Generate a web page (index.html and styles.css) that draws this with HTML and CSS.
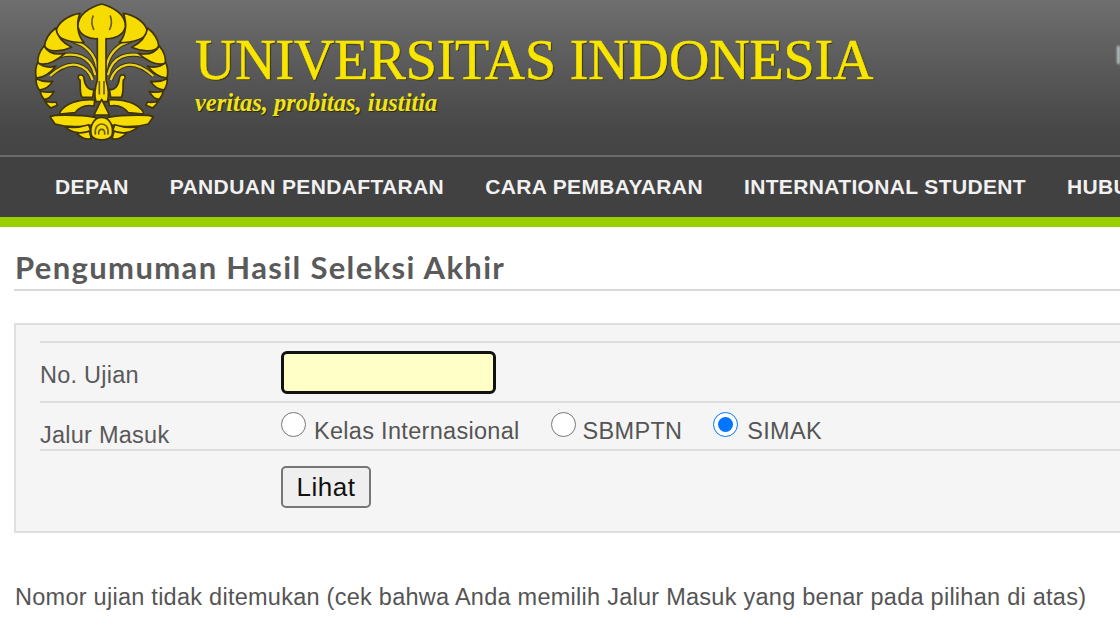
FILE: index.html
```html
<!DOCTYPE html>
<html lang="id">
<head>
<meta charset="utf-8">
<title>Universitas Indonesia</title>
<link rel="stylesheet" href="styles.css">
</head>
<body>
<header class="masthead">
  <svg class="logo" viewBox="0 0 720 480" aria-hidden="true">
    <defs>
      <g id="stems" fill="none">
        <path d="M292 205C285 165 262 135 215 122"/>
        <path d="M286 225C275 175 235 145 145 178"/>
        <path d="M278 240C262 195 215 170 150 228"/>
      </g>
      <g id="half">
        <path d="M240 40C205 45 172 68 168 95C172 118 215 128 252 128C232 105 228 70 240 40Z"/>
        <path d="M167 84C147 100 135 122 134 138C142 155 180 158 215 142C195 132 172 112 167 84Z"/>
        <path d="M132 138C118 155 112 175 114 190C135 197 165 186 195 160C170 165 145 160 132 138Z"/>
        <path d="M113 188C107 200 106 220 109 234C130 234 148 222 168 198C150 204 130 202 113 188Z"/>
        <path d="M108 236C108 250 112 262 118 270C134 268 150 258 158 244C142 246 124 244 108 236Z"/>
        <path d="M120 272C122 282 126 292 132 298C144 298 154 290 162 274C148 278 134 278 120 272Z"/>
        <path d="M134 302C138 310 144 318 152 324L172 316L168 306C156 308 145 307 134 302Z"/>
        <path d="M237 226C232 232 236 238 240 240C242 258 238 278 246 292L278 292L282 268C266 272 255 258 252 236C252 226 244 222 237 226Z"/>
        <path d="M180 336C196 312 232 296 284 300L282 318C262 314 240 318 225 338L180 342Z"/>
        <path d="M150 350L165 346C205 345 250 345 286 352L298 368C262 382 205 384 165 372Z"/>
        <path d="M195 380C220 384 248 380 266 374L272 392C245 403 215 400 195 380Z"/>
        <path d="M230 398C242 400 256 398 268 394L274 416C258 420 240 412 230 398Z"/>
      </g>
    </defs>
    <g class="stems-dark">
      <use href="#stems"/>
      <use href="#stems" transform="translate(610 0) scale(-1 1)"/>
    </g>
    <g class="stems-lite">
      <use href="#stems"/>
      <use href="#stems" transform="translate(610 0) scale(-1 1)"/>
    </g>
    <g class="seal">
      <use href="#half"/>
      <use href="#half" transform="translate(610 0) scale(-1 1)"/>
      <path d="M305 12C268 22 232 45 234 80C238 106 270 118 292 116L292 240C285 262 282 285 288 305L322 305C328 285 325 262 318 240L318 116C340 118 372 106 376 80C378 45 342 22 305 12Z"/>
      <path d="M305 298L328 345L282 345Z"/>
      <path d="M305 352C330 352 342 380 336 406C325 424 285 424 274 406C268 380 280 352 305 352Z"/>
      <path class="cut" d="M279 48C274 62 276 78 281 88M331 48C336 62 334 78 329 88M286 402C284 380 294 372 305 372C316 372 326 380 324 402M296 402C295 392 299 388 305 388C311 388 315 392 314 402M298 245L298 282M312 245L312 282"/>
    </g>
  </svg>
  <div class="brand">
    <div class="brand-name">UNIVERSITAS INDONESIA</div>
    <div class="brand-motto">veritas, probitas, iustitia</div>
  </div>
  <div class="edge-mark"></div>
</header>
<nav class="mainnav">
  <a href="#">DEPAN</a>
  <a href="#">PANDUAN PENDAFTARAN</a>
  <a href="#">CARA PEMBAYARAN</a>
  <a href="#">INTERNATIONAL STUDENT</a>
  <a href="#">HUBUNGI KAMI</a>
</nav>
<main class="content">
  <h1 class="page-title">Pengumuman Hasil Seleksi Akhir</h1>
  <form class="panel">
    <div class="row row-first">
      <label class="field-label" for="no">No. Ujian</label>
      <div class="field"><input class="text-input" id="no" type="text"></div>
    </div>
    <div class="row row-radio">
      <span class="field-label">Jalur Masuk</span>
      <div class="field radios">
        <label class="radio r1"><input type="radio" name="j">Kelas Internasional</label>
        <label class="radio r2"><input type="radio" name="j">SBMPTN</label>
        <label class="radio r3"><input type="radio" name="j" checked>SIMAK</label>
      </div>
    </div>
    <div class="row row-last">
      <span class="field-label"></span>
      <div class="field"><button class="submit" type="button">Lihat</button></div>
    </div>
  </form>
  <p class="message">Nomor ujian tidak ditemukan (cek bahwa Anda memilih Jalur Masuk yang benar pada pilihan di atas)</p>
</main>
</body>
</html>
```
FILE: styles.css
```css
* { box-sizing: border-box; }
html, body { margin: 0; padding: 0; height: 639px; overflow: hidden; background: #fff; }
body { width: 1120px; font-family: "Liberation Sans", Arial, sans-serif; color: #555; }

.masthead {
  display: flex; height: 155px; position: relative; align-items: flex-start;
  background: linear-gradient(#6f6f6f 0, #656565 30px, #474747 130px, #454545 100%);
}
.logo { width: 240px; height: 160px; flex: none; display: block; margin: 0 -45px -5px 0; }
.seal use, .seal path { fill: #f6dc00; stroke: #3f3306; stroke-width: 5; stroke-linejoin: round; }
.seal .cut { fill: none; stroke: #6a5a10; stroke-width: 5; stroke-linecap: round; }
.stems-dark { stroke: #3f3306; stroke-width: 13; }
.stems-lite { stroke: #e6d020; stroke-width: 7; }

.brand { padding-top: 31px; color: #f8e600; font-family: "Liberation Serif", serif; }
.brand-name { font-size: 56px; line-height: 58px; letter-spacing: -.15px; white-space: nowrap; -webkit-text-stroke: .5px #f8e600; text-shadow: 1px 1px 1px #332d05; }
.brand-motto { font-size: 24.5px; line-height: 26px; font-style: italic; font-weight: bold; margin-top: 1px; color: #efe41c; text-shadow: 1px 1px 1px #2c2805; }
.edge-mark { position: absolute; right: 0; top: 46px; width: 3px; height: 18px; background: #b8c4c4; filter: blur(1px); }

.mainnav {
  display: flex; gap: 41px; height: 62px; padding: 0 0 0 55px; align-items: center;
  background: #414141; border-top: 2px solid #6a6a6a; white-space: nowrap; overflow: hidden;
}
.mainnav a { color: #f1f1f1; font-size: 21px; letter-spacing: .36px; font-weight: bold; text-decoration: none; flex: none; }

.content { border-top: 10px solid #9bd000; padding: 0 0 0 14px; }
.page-title {
  margin: 0; height: 64px; padding: 22px 0 0 1px; border-bottom: 2px solid #d9d9d9;
  font-family: Lato, "Open Sans", sans-serif; font-size: 31px; line-height: 36px; letter-spacing: 1.35px; font-weight: 700; color: #5a5a5a; white-space: nowrap;
}
.panel {
  margin-top: 32px; height: 210px; width: 1130px; padding: 16px 0 0 24px;
  background: #f5f5f5; border: 2px solid #dfdfdf;
}
.row { display: flex; border-top: 2px solid #dedede; }
.row-first { height: 60px; align-items: center; }
.row-radio { height: 50px; border-bottom: 2px solid #dedede; }
.row-last { border-top: 0; padding-top: 15px; }
.field-label { width: 241px; flex: none; font-size: 23.5px; letter-spacing: .25px; color: #595959; }
.row-first .field-label { padding-top: 6px; }
.row-radio .field-label { padding-top: 19px; }
.text-input {
  display: block; width: 215px; height: 43px; background: #ffffc8; border: 3px solid #111; border-radius: 6px; outline: 0;
}
.radios { display: flex; padding-top: 11px; }
.radio { display: flex; align-items: flex-start; font-size: 23.5px; letter-spacing: .3px; color: #555; line-height: 28px; padding-top: 3px; }
.radio input { width: 25px; height: 25px; margin: -5px 8px 0 0; accent-color: #0075ff; flex: none; }
.r1 { margin-right: 31px; }
.r2 { margin-right: 31px; }
.r2 input { margin-right: 7px; }
.r3 input { margin-right: 9px; }
.submit {
  width: 90px; height: 42px; padding: 0; font: 26px "Liberation Sans", Arial, sans-serif; letter-spacing: .5px; color: #111;
  background: #efefef; border: 2px solid #767676; border-radius: 5px;
}
.message { margin: 50px 0 0 1px; font-size: 23.5px; letter-spacing: .26px; line-height: 28px; color: #555; white-space: nowrap; }
```
